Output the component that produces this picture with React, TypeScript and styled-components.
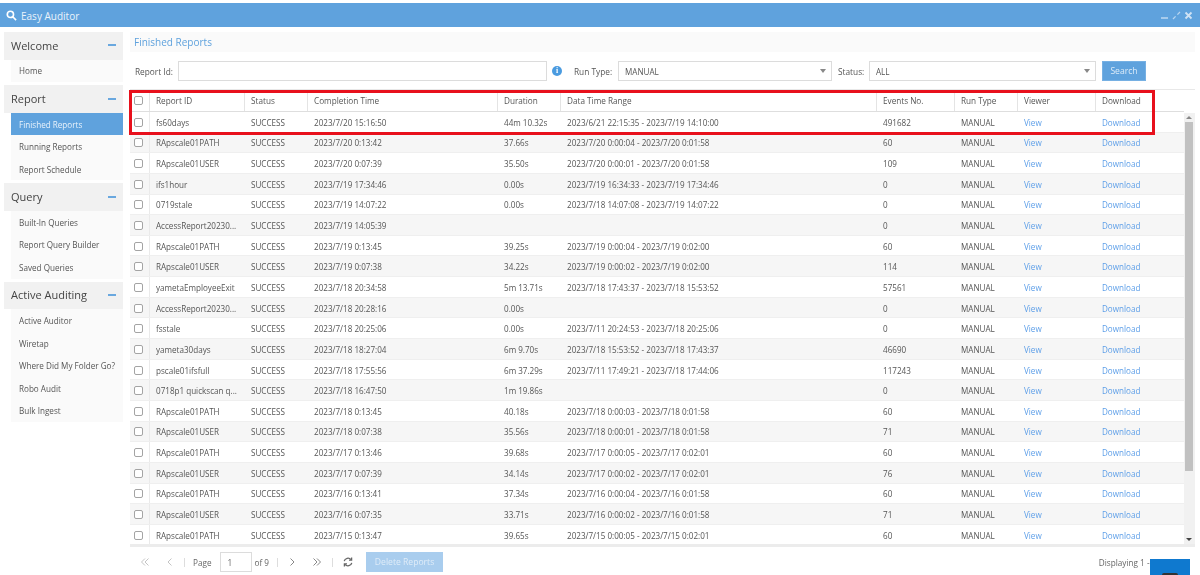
import React from 'react';
import styled, { createGlobalStyle } from 'styled-components';

const Global = createGlobalStyle`
  html, body { margin: 0; padding: 0; background: #fff; }
  body { font-family: "Open Sans", "Liberation Sans", sans-serif; color: #444; overflow: hidden; }
  * { box-sizing: border-box; }
`;
const Page = styled.div`position: relative; width: 1200px; height: 575px; padding-top: 3px; overflow: hidden; display: flex; flex-direction: column; filter: blur(0.3px);`;
const TitleBar = styled.div`height: 24px; background: #5fa2dd; color: #eaf3fb; display: flex; align-items: center; padding: 1px 7px 0 6px; font-size: 10px; gap: 4px; flex: none;`;
const TitleText = styled.span`flex: 1;`;
const WinTools = styled.div`display: flex; gap: 3px; align-items: center;`;
const Body = styled.div`flex: 1; display: flex; padding: 5px 5px 0 4px; gap: 7px; min-height: 0;`;
const Side = styled.nav`width: 119px; flex: none; display: flex; flex-direction: column; gap: 3px;`;
const GroupHead = styled.div`height: 27.7px; background: #f1f1f1; display: flex; align-items: center; justify-content: space-between; padding: 0 7px 1px; font-size: 11px; color: #444;`;
const Minus = styled.span`width: 8px; height: 2px; background: #6aa8df;`;
const Items = styled.div`margin-left: 7px; background: #fafafa; display: flex; flex-direction: column;`;
const Item = styled.div<{ $active?: boolean }>`height: 22.5px; display: flex; align-items: center; padding-left: 8px; font-size: 8.15px; white-space: nowrap; background: ${p => p.$active ? '#5fa2dd' : 'transparent'}; color: ${p => p.$active ? '#e8f2fb' : '#555'};`;
const Main = styled.main`flex: 1; min-width: 0; display: flex; flex-direction: column;`;
const Heading = styled.div`height: 20px; background: #fafafa; color: #5fa2dd; font-size: 10px; display: flex; align-items: center; padding-left: 4px; flex: none;`;
const Filters = styled.div`height: 34px; flex: none; display: flex; align-items: center; padding: 9px 0 5px 5px; font-size: 8.3px; color: #555;`;
const Field = styled.div<{ $w: number }>`width: ${p => p.$w}px; height: 20px; border: 1px solid #dcdcdc; background: #fff; display: flex; align-items: center; justify-content: space-between; padding: 0 5px 0 6px; font-size: 8.1px; color: #555; flex: none;`;
const Caret = styled.span`width: 0; height: 0; border: 3.5px solid transparent; border-top: 4px solid #888; border-bottom: 0;`;
const Label = styled.span<{ $w: number; $pad?: number }>`width: ${p => p.$w}px; padding-left: ${p => p.$pad ?? 0}px; flex: none; white-space: nowrap;`;
const Info = styled.span`width: 10px; height: 10px; margin: 0 12px 0 5px; border-radius: 50%; background: #4a9be0; color: #fff; font: bold 8px/10px "Liberation Serif", serif; text-align: center; flex: none;`;
const SearchBtn = styled.div`width: 44px; height: 20px; margin-left: 6px; background: #5fa2dd; border: 1px solid #76b0e3; color: #dcebf8; font-size: 8.6px; display: flex; align-items: center; justify-content: center; flex: none;`;
const TableWrap = styled.div`flex: none; margin-top: 3px; border-top: 1px solid #e8e8e8; position: relative; height: 458px; border-bottom: 3px solid #ececec; overflow: hidden;`;
const Cols = '20px 95px 63px 190px 63px 316px 78px 63px 78px 88px';
const HeadRow = styled.div`display: grid; grid-template-columns: ${Cols}; height: 22px; border-bottom: 1px solid #dedede; margin-right: 11px;`;
const HeadCell = styled.div`font-size: 8.2px; color: #555; display: flex; align-items: center; padding: 0 0 1px 6px; border-right: 1px solid #e4e4e4; white-space: nowrap; &:first-child { padding-left: 4px; } &:last-child { border-right: 0; }`;
const Scroll = styled.div`position: absolute; top: 23px; bottom: 0; right: 0; width: 11px; background: #f1f1f1; display: flex; flex-direction: column; align-items: center; padding-right: 2px;`;
const Arrow = styled.span<{ $up?: boolean }>`height: 9px; width: 8px; flex: none; display: flex; align-items: center; justify-content: center; &::after { content: ""; border: 3px solid transparent; ${p => p.$up ? 'border-bottom: 3px solid #888; border-top: 0;' : 'border-top: 3px solid #444; border-bottom: 0;'} }`;
const Thumb = styled.div`width: 8px; height: 349px; background: #c1c1c1; flex: none;`;
const Filler = styled.div`flex: 1;`;
const Row = styled.div<{ $alt?: boolean }>`display: grid; grid-template-columns: ${Cols}; height: 20.65px; margin-right: 11px; background: ${p => p.$alt ? '#f6f6f6' : '#fff'}; border-bottom: 1px solid #efefef;`;
const Cell = styled.div<{ $first?: boolean }>`font-size: 8.1px; color: #555; display: flex; align-items: center; padding: 1px 0 0 ${p => p.$first ? 4 : 6}px; white-space: nowrap; overflow: hidden; ${p => p.$first ? 'border-right: 1px solid #eaeaea;' : ''}`;
const LinkText = styled.span`color: #5c9ee8;`;
const Check = styled.span`width: 9px; height: 9px; border: 1px solid #a4a4a4; border-radius: 2px; background: #fff; display: block;`;
const Pager = styled.div`flex: 1; display: flex; align-items: center; padding: 2px 0 0 5px; font-size: 8.2px; color: #666; white-space: nowrap;`;
const PageIcon = styled.span<{ $w: number; $dim?: boolean; $ml?: number }>`width: ${p => p.$w}px; margin-left: ${p => p.$ml ?? 0}px; flex: none; display: flex; align-items: center; color: ${p => p.$dim ? '#c4c4c4' : '#888'};`;
const Sep = styled.span<{ $l?: number; $r?: number }>`width: 1px; height: 9px; background: #ddd; flex: none; margin: 0 ${p => p.$r ?? 0}px 0 ${p => p.$l ?? 0}px;`;
const PageLabel = styled.span`margin-left: 8px;`;
const PageInput = styled.span`width: 32px; height: 20px; border: 1px solid #dcdcdc; display: flex; align-items: center; padding-left: 7px; margin: 0 3px 0 8px; flex: none;`;
const DeleteBtn = styled.div`width: 77px; height: 20px; background: #a9cdee; color: #dfecf8; font-size: 8.6px; display: flex; align-items: center; justify-content: center; flex: none;`;
const Display = styled.span`margin-left: auto; margin-right: 8px; color: #666;`;
const RedBox = styled.div`position: absolute; left: 129px; top: 90px; width: 1026px; height: 45px; border: 3px solid #e8101c; pointer-events: none;`;
const Blue = styled.div`position: absolute; left: 1150px; top: 559px; width: 40px; height: 16px; background: #0f79cf; &::after { content: ""; position: absolute; left: 12px; bottom: 0; width: 16px; height: 2px; background: #333; border-radius: 2px 2px 0 0; }`;

type R = [string, string, string, string, string, string];
const rows: R[] = [
  ['fs60days','2023/7/20 15:16:50','44m 10.32s','2023/6/21 22:15:35 - 2023/7/19 14:10:00','491682','x'],
  ['RApscale01PATH','2023/7/20 0:13:42','37.66s','2023/7/20 0:00:04 - 2023/7/20 0:01:58','60','a'],
  ['RApscale01USER','2023/7/20 0:07:39','35.50s','2023/7/20 0:00:01 - 2023/7/20 0:01:58','109','x'],
  ['ifs1hour','2023/7/19 17:34:46','0.00s','2023/7/19 16:34:33 - 2023/7/19 17:34:46','0','a'],
  ['0719stale','2023/7/19 14:07:22','0.00s','2023/7/18 14:07:08 - 2023/7/19 14:07:22','0','x'],
  ['AccessReport20230...','2023/7/19 14:05:39','','','0','a'],
  ['RApscale01PATH','2023/7/19 0:13:45','39.25s','2023/7/19 0:00:04 - 2023/7/19 0:02:00','60','x'],
  ['RApscale01USER','2023/7/19 0:07:38','34.22s','2023/7/19 0:00:02 - 2023/7/19 0:02:00','114','a'],
  ['yametaEmployeeExit','2023/7/18 20:34:58','5m 13.71s','2023/7/18 17:43:37 - 2023/7/18 15:53:52','57561','x'],
  ['AccessReport20230...','2023/7/18 20:28:16','0.00s','','0','a'],
  ['fsstale','2023/7/18 20:25:06','0.00s','2023/7/11 20:24:53 - 2023/7/18 20:25:06','0','x'],
  ['yameta30days','2023/7/18 18:27:04','6m 9.70s','2023/7/18 15:53:52 - 2023/7/18 17:43:37','46690','a'],
  ['pscale01ifsfull','2023/7/18 17:55:56','6m 37.29s','2023/7/11 17:49:21 - 2023/7/18 17:44:06','117243','x'],
  ['0718p1 quickscan q...','2023/7/18 16:47:50','1m 19.86s','','0','a'],
  ['RApscale01PATH','2023/7/18 0:13:45','40.18s','2023/7/18 0:00:03 - 2023/7/18 0:01:58','60','x'],
  ['RApscale01USER','2023/7/18 0:07:38','35.56s','2023/7/18 0:00:01 - 2023/7/18 0:01:58','71','a'],
  ['RApscale01PATH','2023/7/17 0:13:46','39.68s','2023/7/17 0:00:05 - 2023/7/17 0:02:01','60','x'],
  ['RApscale01USER','2023/7/17 0:07:39','34.14s','2023/7/17 0:00:02 - 2023/7/17 0:02:01','76','a'],
  ['RApscale01PATH','2023/7/16 0:13:41','37.34s','2023/7/16 0:00:04 - 2023/7/16 0:01:58','60','x'],
  ['RApscale01USER','2023/7/16 0:07:35','33.71s','2023/7/16 0:00:02 - 2023/7/16 0:01:58','71','a'],
  ['RApscale01PATH','2023/7/15 0:13:47','39.65s','2023/7/15 0:00:05 - 2023/7/15 0:02:01','60','x'],
];
const heads = ['Report ID','Status','Completion Time','Duration','Data Time Range','Events No.','Run Type','Viewer','Download'];
const groups: { title: string; items: string[]; active?: string }[] = [
  { title: 'Welcome', items: ['Home'] },
  { title: 'Report', items: ['Finished Reports','Running Reports','Report Schedule'], active: 'Finished Reports' },
  { title: 'Query', items: ['Built-In Queries','Report Query Builder','Saved Queries'] },
  { title: 'Active Auditing', items: ['Active Auditor','Wiretap','Where Did My Folder Go?','Robo Audit','Bulk Ingest'] },
];
const Chev = ({ d }: { d: string }) => (
  <svg width="10" height="10" viewBox="0 0 10 10" fill="none" stroke="currentColor" strokeWidth="1"><path d={d} /></svg>
);

export default function App() {
  return (
    <Page>
      <Global />
      <TitleBar>
        <svg width="11" height="11" viewBox="0 0 12 12" fill="none" stroke="#fff" strokeWidth="1.8"><circle cx="4.8" cy="4.8" r="3.4" /><path d="M7.4 7.4L11 11" /></svg>
        <TitleText>Easy Auditor</TitleText>
        <WinTools>
          <svg width="9" height="9" viewBox="0 0 9 9" stroke="#b9d6f0" strokeWidth="1.6"><path d="M1 7h7" /></svg>
          <svg width="9" height="9" viewBox="0 0 9 9" stroke="#b9d6f0" strokeWidth="1.3" fill="#b9d6f0"><path d="M1 8L3.6 5.4M8 1L5.4 3.6" /></svg>
          <svg width="9" height="9" viewBox="0 0 9 9" stroke="#cfe2f4" strokeWidth="1.8"><path d="M1.5 1.5l6 6M7.5 1.5l-6 6" /></svg>
        </WinTools>
      </TitleBar>
      <Body>
        <Side>
          {groups.map(g => (
            <div key={g.title}>
              <GroupHead>{g.title}<Minus /></GroupHead>
              <Items>
                {g.items.map(i => <Item key={i} $active={i === g.active}>{i}</Item>)}
              </Items>
            </div>
          ))}
        </Side>
        <Main>
          <Heading>Finished Reports</Heading>
          <Filters>
            <Label $w={43}>Report Id:</Label>
            <Field $w={369} />
            <Info>i</Info>
            <Label $w={44}>Run Type:</Label>
            <Field $w={214}>MANUAL<Caret /></Field>
            <Label $w={37} $pad={6}>Status:</Label>
            <Field $w={227}>ALL<Caret /></Field>
            <SearchBtn>Search</SearchBtn>
          </Filters>
          <TableWrap>
            <HeadRow>
              <HeadCell><Check /></HeadCell>
              {heads.map(h => <HeadCell key={h}>{h}</HeadCell>)}
            </HeadRow>
            {rows.map((r, i) => (
              <Row key={i} $alt={r[5] === 'a'}>
                <Cell $first><Check /></Cell>
                <Cell>{r[0]}</Cell>
                <Cell>SUCCESS</Cell>
                <Cell>{r[1]}</Cell>
                <Cell>{r[2]}</Cell>
                <Cell>{r[3]}</Cell>
                <Cell>{r[4]}</Cell>
                <Cell>MANUAL</Cell>
                <Cell><LinkText>View</LinkText></Cell>
                <Cell><LinkText>Download</LinkText></Cell>
              </Row>
            ))}
            <Scroll>
              <Arrow $up />
              <Thumb />
              <Filler />
              <Arrow />
            </Scroll>
          </TableWrap>
          <Pager>
            <PageIcon $w={25} $dim $ml={5}><Chev d="M5 1.5L1.5 5 5 8.5M8.5 1.5L5 5l3.5 3.5" /></PageIcon>
            <PageIcon $w={19} $dim><Chev d="M6.5 1.5L3 5l3.5 3.5" /></PageIcon>
            <Sep />
            <PageLabel>Page</PageLabel>
            <PageInput>1</PageInput>
            <span>of 9</span>
            <Sep $l={8} $r={9} />
            <PageIcon $w={25}><Chev d="M3.5 1.5L7 5 3.5 8.5" /></PageIcon>
            <PageIcon $w={20}><Chev d="M1.5 1.5L5 5 1.5 8.5M5 1.5L8.5 5 5 8.5" /></PageIcon>
            <Sep $r={10} />
            <PageIcon $w={23}>
              <svg width="10" height="10" viewBox="0 0 10 10" fill="none" stroke="#666" strokeWidth="1.3"><path d="M1.2 4.2A3.9 3.9 0 0 1 8 2.6M8.8 5.8A3.9 3.9 0 0 1 2 7.4" /><path d="M8.6 0.6v2.6H6M1.4 9.4V6.8H4" /></svg>
            </PageIcon>
            <DeleteBtn>Delete Reports</DeleteBtn>
            <Display>Displaying 1 - 21 of 177</Display>
          </Pager>
        </Main>
      </Body>
      <RedBox />
      <Blue />
    </Page>
  );
}
